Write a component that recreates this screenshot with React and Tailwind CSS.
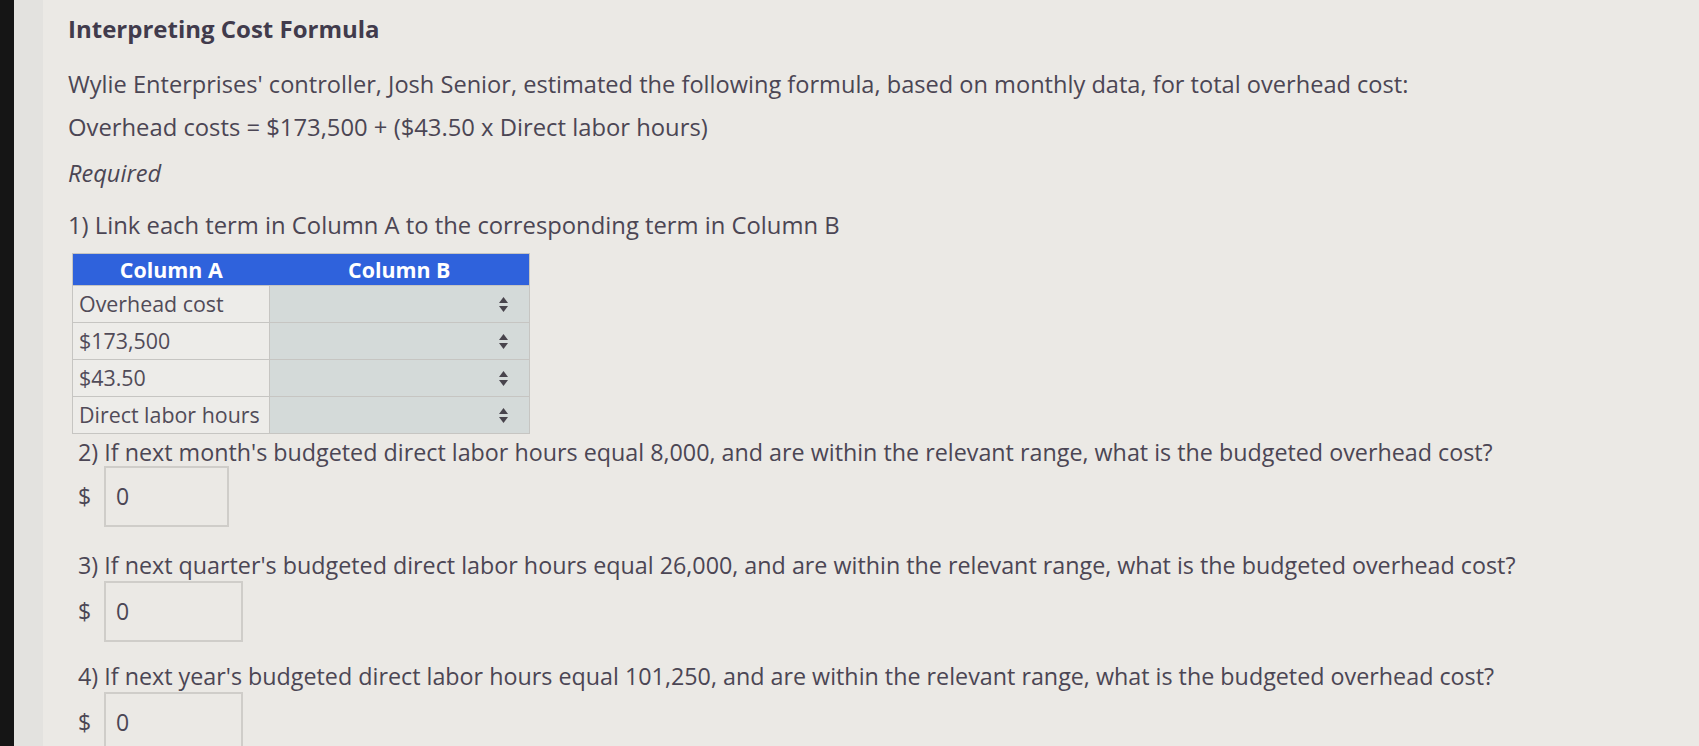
import React from 'react';

const SortIcon = () => (
    <svg width="11" height="17" viewBox="0 0 11 17" className="shrink-0">
        <path d="M5.5 1 L10 7 L1 7 Z" fill="#48444c" />
        <path d="M5.5 16 L10 10 L1 10 Z" fill="#48444c" />
    </svg>
);

const rows = ['Overhead cost', '$173,500', '$43.50', 'Direct labor hours'];

const AnswerBox = ({ width, mt }) => (
    <div className={`flex items-center ${mt}`}>
        <span className="w-[36px] pl-[10px] text-[23px] text-[#4b4654]">$</span>
        <div className={`h-[61px] ${width} border-2 border-[#cfcdc9] flex items-center pl-[10px] text-[23px] text-[#4b4654]`}>
            0
        </div>
    </div>
);

export default function App() {
    return (
        <div className="flex w-[1699px] h-[746px] overflow-hidden bg-[#ebe9e5] font-['Open_Sans',sans-serif]">
            {/* bezel edge */}
            <div className="w-[14px] shrink-0 bg-[#151515]" />
            <div className="w-[29px] shrink-0 bg-[#e3e2df]" />

            <div className="flex-1 pl-[25px] pt-[14px] text-[#4b4654]">
                <h1 className="text-[24px] font-bold leading-[30px] text-[#413b4c]">Interpreting Cost Formula</h1>

                <p className="mt-[26px] text-[23.6px] leading-[28px]">
                    Wylie Enterprises' controller, Josh Senior, estimated the following formula, based on monthly data, for total overhead cost:
                </p>
                <p className="mt-[15px] text-[23.8px] leading-[28px]">
                    Overhead costs = $173,500 + ($43.50 x Direct labor hours)
                </p>
                <p className="mt-[18px] text-[23.6px] leading-[28px] italic">Required</p>
                <p className="mt-[24px] text-[23.8px] leading-[28px]">1) Link each term in Column A to the corresponding term in Column B</p>

                <table className="mt-[14px] ml-[4px] w-[458px] border-collapse border border-[#c6c5c2]">
                    <thead>
                        <tr className="bg-[#2f62dc] text-white h-[31px]">
                            <th className="w-[197px] font-bold text-[21.4px] leading-[31px]">Column A</th>
                            <th className="font-bold text-[21.4px] leading-[31px]">Column B</th>
                        </tr>
                    </thead>
                    <tbody>
                        {rows.map((r) => (
                            <tr key={r} className="h-[37px]">
                                <td className="border border-[#c6c5c2] bg-[#edece9] px-[6px] text-[21.4px] leading-[28px] text-[#514b58] whitespace-nowrap">{r}</td>
                                <td className="border border-[#c6c5c2] bg-[#d4dad9] pr-[20px]">
                                    <div className="flex justify-end">
                                        <SortIcon />
                                    </div>
                                </td>
                            </tr>
                        ))}
                    </tbody>
                </table>

                <p className="mt-[4px] pl-[10px] text-[23.3px] leading-[28px]">
                    2) If next month's budgeted direct labor hours equal 8,000, and are within the relevant range, what is the budgeted overhead cost?
                </p>
                <AnswerBox width="w-[125px]" mt="mt-[0px]" />

                <p className="mt-[24px] pl-[10px] text-[23.3px] leading-[28px]">
                    3) If next quarter's budgeted direct labor hours equal 26,000, and are within the relevant range, what is the budgeted overhead cost?
                </p>
                <AnswerBox width="w-[139px]" mt="mt-[2px]" />

                <p className="mt-[20px] pl-[10px] text-[23.3px] leading-[28px]">
                    4) If next year's budgeted direct labor hours equal 101,250, and are within the relevant range, what is the budgeted overhead cost?
                </p>
                <AnswerBox width="w-[139px]" mt="mt-[2px]" />
            </div>
        </div>
    );
}
